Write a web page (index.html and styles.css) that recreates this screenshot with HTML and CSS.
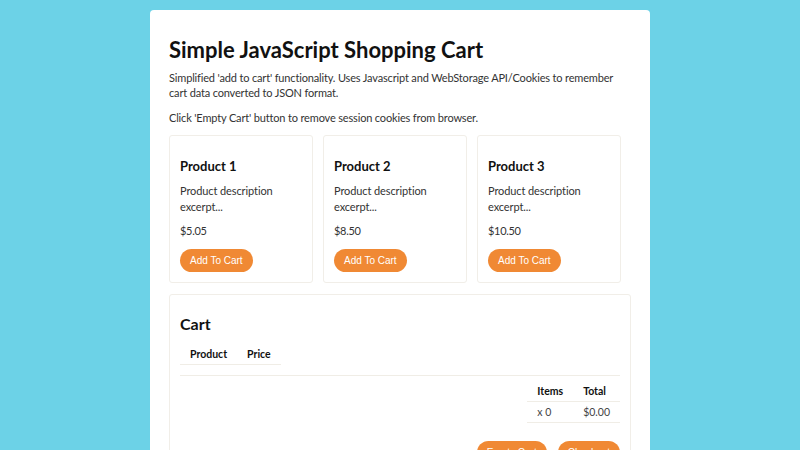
FILE: index.html
```html
<!DOCTYPE html>
<html>
<head>
<meta charset="utf-8">
<link rel="stylesheet" href="styles.css">
</head>
<body>
<main class="container">
  <h1 class="title">Simple JavaScript Shopping Cart</h1>
  <p class="intro">Simplified 'add to cart' functionality. Uses Javascript and WebStorage API/Cookies to remember cart data converted to JSON format.</p>
  <p class="intro">Click 'Empty Cart' button to remove session cookies from browser.</p>
  <section class="products">
    <div class="card">
      <h3 class="card-title">Product 1</h3>
      <p class="card-desc">Product description excerpt...</p>
      <p class="card-price">$5.05</p>
      <button class="btn">Add To Cart</button>
    </div>
    <div class="card">
      <h3 class="card-title">Product 2</h3>
      <p class="card-desc">Product description excerpt...</p>
      <p class="card-price">$8.50</p>
      <button class="btn">Add To Cart</button>
    </div>
    <div class="card">
      <h3 class="card-title">Product 3</h3>
      <p class="card-desc">Product description excerpt...</p>
      <p class="card-price">$10.50</p>
      <button class="btn">Add To Cart</button>
    </div>
  </section>
  <section class="cart">
    <h2 class="cart-title">Cart</h2>
    <table class="tbl">
      <thead><tr><th>Product</th><th>Price</th></tr></thead>
    </table>
    <hr class="rule">
    <div class="totals-wrap">
      <table class="tbl totals">
        <thead><tr><th>Items</th><th>Total</th></tr></thead>
        <tbody><tr><td>x 0</td><td>$0.00</td></tr></tbody>
      </table>
    </div>
    <div class="actions">
      <button class="btn">Empty Cart</button>
      <button class="btn">Checkout</button>
    </div>
  </section>
</main>
</body>
</html>
```
FILE: styles.css
```css
html, body {
  margin: 0;
  padding: 0;
}
body {
  background: #6cd2e7;
  font-family: "Lato", "Open Sans", sans-serif;
  color: #333;
  padding-top: 10px;
}
.container {
  width: 462px;
  margin: 0 auto;
  background: #fff;
  border-radius: 4px;
  padding: 27px 19px 20px;
}
.title {
  margin: 0 0 7px;
  font-size: 22px;
  line-height: 26px;
  font-weight: 700;
  color: #111;
}
.intro {
  margin: 0 0 10px;
  font-size: 11px;
  letter-spacing: -0.16px;
  line-height: 15px;
}
.products {
  display: flex;
  gap: 10px;
  width: 452px;
  margin-top: 9px;
}
.card {
  flex: 1;
  border: 1px solid #f1eee8;
  border-radius: 3px;
  padding: 21px 10px 10px;
}
.card-title {
  margin: 0 0 8px;
  font-size: 13px;
  line-height: 18px;
  color: #111;
}
.card-desc {
  margin: 0 0 8px;
  font-size: 11px;
  letter-spacing: -0.1px;
  line-height: 16px;
}
.card-price {
  margin: 0 0 10px;
  font-size: 11px;
  letter-spacing: -0.3px;
  line-height: 16px;
}
.btn {
  display: block;
  height: 23px;
  padding: 0 10px;
  border: none;
  border-radius: 12px;
  background: #f08934;
  color: #fff;
  font-family: "Liberation Sans", Arial, sans-serif;
  font-size: 10px;
}
.cart {
  margin-top: 11px;
  border: 1px solid #f1eee8;
  border-radius: 3px;
  padding: 19px 10px 10px;
}
.cart-title {
  margin: 0 0 10px;
  font-size: 16px;
  line-height: 20px;
  color: #111;
}
.tbl {
  border-collapse: collapse;
  font-size: 10.5px;
}
.tbl th {
  text-align: left;
  color: #111;
  padding: 4px 10px;
  line-height: 12px;
  border-bottom: 1px solid #f0ede6;
}
.tbl td {
  padding: 4px 10px;
  line-height: 12px;
  color: #444;
  border-bottom: 1px solid #f0ede6;
}
.rule {
  margin: 10px 0 0;
  border: none;
  border-top: 1px solid #f0ede6;
}
.totals-wrap {
  display: flex;
  justify-content: flex-end;
  margin-top: 5px;
}
.actions {
  display: flex;
  justify-content: flex-end;
  gap: 11px;
  margin-top: 18px;
}
```
